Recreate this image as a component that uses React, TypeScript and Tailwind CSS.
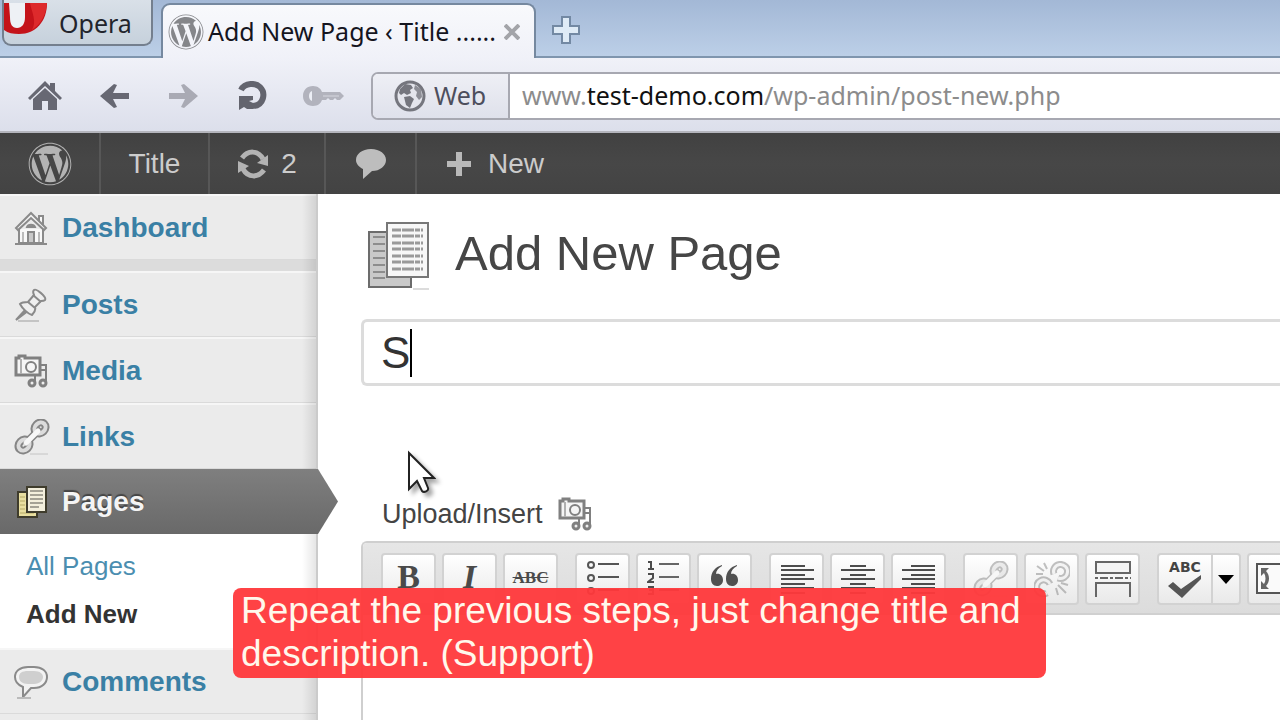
import { useState, type ReactNode } from "react";
import { FaWordpress } from "react-icons/fa";
import clsx from "clsx";

// --- browser chrome icons

const OperaLogo = () => (
  <svg width="46" height="36" viewBox="0 0 46 36" aria-hidden="true">
    <path d="M0 3H43C43 21 32 34 15 34C9 34 4 33 0 30Z" fill="#c4131a" />
    <path d="M26 3H43C42 15 37 24 28 30C33 21 28 13 26 3Z" fill="#dd2a2c" />
    <path d="M5 3H21V17C21 24 18 28 13 28C8 28 6 24 6 17Z" fill="#eef1f5" />
  </svg>
);

const HomeIcon = () => (
  <svg width="34" height="30" viewBox="0 0 34 30" fill="#676873" aria-hidden="true">
    <path d="M17 0L22 5V2H27V10L34 17L32 19L17 5L2 19L0 17Z" />
    <path d="M17 7L29 18V29H20V20H14V29H5V18Z" />
  </svg>
);

const ArrowIcon = ({ flip, color }: { flip?: boolean; color: string }) => (
  <svg
    className={clsx(flip && "rotate-180")}
    width="30"
    height="26"
    viewBox="0 0 30 26"
    fill={color}
    aria-hidden="true"
  >
    <path d="M0 13L14 1L17 2L13 10H29V16H13L17 24L14 25Z" />
  </svg>
);

const ReloadIcon = () => (
  <svg width="30" height="30" viewBox="0 0 30 30" aria-hidden="true">
    <path
      d="M3 9C7 1 18 2 22 6C28 12 26 25 14 25"
      fill="none"
      stroke="#63646e"
      strokeWidth="6"
    />
    <path d="M1 15H15V19L11 20L15 22V28H9L6 26L1 29Z" fill="#63646e" />
  </svg>
);

const KeyIcon = () => (
  <svg width="41" height="20" viewBox="0 0 41 20" aria-hidden="true">
    <path
      d="M10 0C15 0 18 3 19 6H37L41 10L37 14H34L32 12L30 14H27L25 12L23 14H19C18 17 15 20 10 20C4 20 0 16 0 10S4 0 10 0Z"
      fill="#b2b3bd"
    />
    <path d="M9 5C5 6 5 14 9 15Z" fill="#eceef5" />
    <path d="M20 10H36" stroke="#c4c5ce" strokeWidth="2" />
  </svg>
);

const GlobeIcon = () => (
  <svg width="32" height="32" viewBox="0 0 32 32" aria-hidden="true">
    <circle cx="16" cy="16" r="14" fill="#e4e5ec" stroke="#75767e" strokeWidth="3" />
    <path d="M6 9L11 4L17 5L19 8L16 10L17 13L13 15L10 13L7 15L5 13Z" fill="#75767e" />
    <path d="M10 17L16 16L20 19L18 23L16 28L12 25Z" fill="#75767e" />
    <path d="M21 5L27 9L28 17L25 20L22 16L23 12L20 9Z" fill="#8d8e96" />
  </svg>
);

const NewTabIcon = () => (
  <svg width="28" height="28" viewBox="0 0 28 28" aria-hidden="true">
    <path
      d="M10 1H18V10H27V18H18V27H10V18H1V10H10Z"
      fill="#dfebf6"
      stroke="#7389a3"
      strokeWidth="2"
    />
  </svg>
);

const CloseIcon = () => (
  <svg width="16" height="16" viewBox="0 0 16 16" aria-hidden="true">
    <path d="M1 1L15 15M15 1L1 15" stroke="#a3a4a9" strokeWidth="4" />
  </svg>
);

// --- admin bar icons

const UpdatesIcon = () => (
  <svg width="32" height="30" viewBox="0 0 32 30" aria-hidden="true">
    <g fill="none" stroke="#b3b3b3" strokeWidth="5">
      <path d="M5 9C11 1 21 1 26 10" />
      <path d="M27 21C21 29 11 29 6 20" />
    </g>
    <path d="M31 6V17L20 14Z" fill="#b3b3b3" />
    <path d="M1 24V12L12 17Z" fill="#b3b3b3" />
  </svg>
);

const BubbleIcon = () => (
  <svg width="32" height="32" viewBox="0 0 32 32" aria-hidden="true">
    <path
      d="M16 1C25 1 31 6 31 12S25 23 17 23L8 31V21C4 19 1 16 1 12C1 6 7 1 16 1Z"
      fill="#bdbdbd"
    />
  </svg>
);

const PlusIcon = () => (
  <svg width="26" height="26" viewBox="0 0 26 26" aria-hidden="true">
    <path d="M10 1H16V10H25V16H16V25H10V16H1V10H10Z" fill="#b9b9b9" />
  </svg>
);

// --- sidebar icons

const DashboardIcon = () => (
  <svg width="34" height="34" viewBox="0 0 34 34" fill="none" stroke="#8a8a8a" strokeWidth="2" aria-hidden="true">
    <path d="M5 18V32H29V18" fill="#f8f8f8" />
    <path d="M25 10V5H29V14" fill="#f8f8f8" />
    <path d="M17 2L32 17L30 19L17 7L4 19L2 17Z" fill="#f2f2f2" />
    <path d="M14 31V21H20V31" fill="#c9c9c9" />
    <path d="M13 16C14 13 20 13 21 16Z" fill="#aaa" />
    <path d="M9 21V31M25 21V31" stroke="#bbb" />
    <path d="M1 33H33" />
  </svg>
);

const PinIcon = () => (
  <svg width="34" height="34" viewBox="0 0 34 34" fill="none" stroke="#8a8a8a" strokeWidth="2" aria-hidden="true">
    <path d="M2 32L12 21L14 23Z" fill="#999" />
    <path
      d="M20 2C22 0 33 9 31 12C30 13 28 13 27 13L21 19C22 22 20 25 18 27C14 26 8 20 6 16C8 14 12 14 14 14L20 7C19 5 19 3 20 2Z"
      fill="#efefef"
    />
    <path d="M19 7L27 14M14 14L21 20" />
    <path d="M4 33H25" stroke="#c4c4c4" />
  </svg>
);

const MediaIcon = () => (
  <svg width="34" height="34" viewBox="0 0 34 34" fill="none" stroke="#808080" strokeWidth="2" aria-hidden="true">
    <path d="M21 28V11H32V29" />
    <path d="M21 16H32" />
    <circle cx="18" cy="29" r="3" fill="#eee" strokeWidth="3" />
    <circle cx="29" cy="29" r="3" fill="#eee" strokeWidth="3" />
    <path d="M2 4H5V2H11V4H26V21H2Z" fill="#f5f5f5" strokeWidth="3" />
    <path d="M7 5V20" stroke="#b0b0b0" />
    <circle cx="17" cy="13" r="5" />
  </svg>
);

const LinkIcon = () => (
  <svg width="36" height="36" viewBox="0 0 36 36" fill="none" aria-hidden="true">
    <g stroke="#858585" strokeWidth="8" strokeLinecap="round">
      <ellipse cx="26" cy="9" rx="6" ry="5" transform="rotate(-45 26 9)" />
      <ellipse cx="10" cy="26" rx="6" ry="5" transform="rotate(-45 10 26)" />
      <path d="M13 23L24 12" />
    </g>
    <g stroke="#dcdcdc" strokeWidth="4" strokeLinecap="round">
      <ellipse cx="26" cy="9" rx="6" ry="5" transform="rotate(-45 26 9)" />
      <ellipse cx="10" cy="26" rx="6" ry="5" transform="rotate(-45 10 26)" />
    </g>
    <path d="M12 24L24 12" stroke="#f8f8f8" strokeWidth="5" strokeLinecap="round" />
    <path d="M16 35H34" stroke="#c4c4c4" />
  </svg>
);

const UnlinkIcon = () => (
  <svg width="36" height="36" viewBox="0 0 36 36" fill="none" aria-hidden="true">
    <g stroke="#858585" strokeWidth="7">
      <path d="M20 13A7 7 0 1 1 24 17" />
      <path d="M16 23A7 7 0 1 0 13 32" />
    </g>
    <g stroke="#eee" strokeWidth="3">
      <path d="M20 13A7 7 0 1 1 24 17" />
      <path d="M16 23A7 7 0 1 0 13 32" />
    </g>
    <path
      d="M3 5L10 10M10 2L13 8M2 13L9 13M24 24L32 32M22 27L24 34M27 22L34 24"
      stroke="#858585"
      strokeWidth="2"
    />
  </svg>
);

const PagesIcon = () => (
  <svg width="32" height="34" viewBox="0 0 32 34" aria-hidden="true">
    <path d="M2 7H21V32H2Z" fill="#e9dfa0" stroke="#3f3c2c" strokeWidth="2" />
    <path d="M4 12H9M4 16H9M4 20H9M4 24H9M4 28H18" stroke="#b5a967" strokeWidth="1" />
    <path d="M11 2H30V27H11Z" fill="#f3efdc" stroke="#3f3c2c" strokeWidth="2" />
    <path d="M14 6H27M14 10H27M14 14H27M14 18H27M14 22H23" stroke="#a5a295" strokeWidth="2" />
  </svg>
);

const CommentsIcon = () => (
  <svg width="34" height="34" viewBox="0 0 34 34" aria-hidden="true">
    <path
      d="M14 2H20C28 2 33 6 33 12S28 23 20 23H17L9 32V22C4 20 1 17 1 12C1 6 6 2 14 2Z"
      fill="#f3f3f3"
      stroke="#8a8a8a"
      strokeWidth="2"
    />
    <path d="M14 6H20C26 6 29 9 29 12S26 19 20 19H14C8 19 5 16 5 12S8 6 14 6Z" fill="#cfcfcf" />
    <path d="M3 33H17" stroke="#bbb" strokeWidth="2" />
  </svg>
);

const BigPagesIcon = () => (
  <svg width="64" height="70" viewBox="0 0 64 70" aria-hidden="true">
    <path d="M2 11H44V66H2Z" fill="#c9c9c9" stroke="#6c6c6c" strokeWidth="2" />
    <path d="M6 16H18M6 23H18M6 30H18M6 37H18M6 44H18M6 51H18M6 57H18" stroke="#8d8d8d" strokeWidth="2" />
    <path d="M46 68H62" stroke="#dcdcdc" strokeWidth="2" />
    <path d="M20 2H61V56H20Z" fill="#f7f7f7" stroke="#777" strokeWidth="2" />
    <path
      d="M25 9H56M25 15H56M25 22H56M25 28H56M25 35H56M25 41H56M25 48H56"
      stroke="#9a9a9a"
      strokeWidth="3"
      strokeDasharray="9 1 12 1 5 1"
    />
  </svg>
);

// --- editor icons

const AlignIcon = ({ lines }: { lines: string }) => (
  <svg width="34" height="32" viewBox="0 0 34 32" stroke="#4c4c4c" strokeWidth="2" aria-hidden="true">
    <path d={lines} />
  </svg>
);

const BulletsIcon = () => (
  <svg width="34" height="38" viewBox="0 0 34 38" fill="none" stroke="#555" strokeWidth="2" aria-hidden="true">
    <circle cx="5" cy="5" r="3" />
    <circle cx="5" cy="18" r="3" />
    <circle cx="5" cy="31" r="3" />
    <path d="M12 4H33M12 17H33M12 30H33" />
  </svg>
);

const NumbersIcon = () => (
  <svg width="34" height="38" viewBox="0 0 34 38" fill="none" stroke="#4c4c4c" strokeWidth="2" aria-hidden="true">
    <path d="M1 2H4V9M1 9H7" />
    <path d="M1 14H6V18L1 22H7" />
    <path d="M1 27H6V34H1M2 30H6" />
    <path d="M12 4H32M12 17H32M12 30H32" stroke="#666" />
  </svg>
);

const QuoteIcon = () => (
  <svg width="28" height="28" viewBox="0 0 28 28" fill="#505050" aria-hidden="true">
    <path d="M11 1C7 3 5 6 5 9C9 8 12 11 12 15C12 19 9 21 6 21C2 21 0 18 0 14C0 7 4 2 11 0Z" />
    <path d="M26 1C22 3 20 6 20 9C24 8 27 11 27 15C27 19 24 21 21 21C17 21 15 18 15 14C15 7 19 2 26 0Z" />
  </svg>
);

const MoreIcon = () => (
  <svg width="36" height="36" viewBox="0 0 36 36" fill="none" stroke="#666" strokeWidth="2" aria-hidden="true">
    <path d="M1 1H35V12H1Z" fill="#f4f4f4" />
    <path d="M0 17H36" strokeDasharray="3 2 8 2" />
    <path d="M1 36V22H35V36" />
  </svg>
);

const SpellcheckIcon = () => (
  <span className="flex flex-col items-center font-['DejaVu_Sans',sans-serif] text-[14px] leading-[14px] font-bold text-[#444]">
    ABC
    <svg width="36" height="24" viewBox="0 0 36 24" aria-hidden="true">
      <path d="M1 12L6 8L14 15L34 1V5L15 24Z" fill="#555" />
    </svg>
  </span>
);

const FullscreenIcon = () => (
  <svg width="44" height="32" viewBox="0 0 44 32" aria-hidden="true">
    <path d="M1 1H43V30H1Z" fill="#fafafa" stroke="#555" strokeWidth="2" />
    <path d="M5 5H13L10 8C14 12 14 19 10 23L13 26H5V18L8 21C10 18 10 13 8 10L5 13Z" fill="#666" />
    <path d="M39 5H31L34 8C30 12 30 19 34 23L31 26H39V18L36 21C34 18 34 13 36 10L39 13Z" fill="#666" />
  </svg>
);

type Tool = { label: string; icon: ReactNode; disabled?: boolean };

const toolGroups: Tool[][] = [
  [
    { label: "Bold", icon: <span className="pb-1 font-['Liberation_Serif',serif] text-[34px] font-bold">B</span> },
    { label: "Italic", icon: <span className="pb-1 font-['Liberation_Serif',serif] text-[34px] font-bold italic">I</span> },
    {
      label: "Strikethrough",
      icon: <span className="pb-1 font-['Liberation_Serif',serif] text-[17px] font-bold line-through">ABC</span>,
    },
  ],
  [
    { label: "Unordered list", icon: <BulletsIcon /> },
    { label: "Ordered list", icon: <NumbersIcon /> },
    { label: "Blockquote", icon: <QuoteIcon /> },
  ],
  [
    {
      label: "Align left",
      icon: <AlignIcon lines="M1 3H25M1 7H34M1 12H25M1 16H34M1 21H25M1 25H34M1 30H25" />,
    },
    {
      label: "Align center",
      icon: <AlignIcon lines="M9 3H25M0 7H34M9 12H25M0 16H34M9 21H25M0 25H34M9 30H25" />,
    },
    {
      label: "Align right",
      icon: <AlignIcon lines="M9 3H33M0 7H33M9 12H33M0 16H33M9 21H33M0 25H33M9 30H33" />,
    },
  ],
  [
    { label: "Insert link", icon: <LinkIcon />, disabled: true },
    { label: "Unlink", icon: <UnlinkIcon />, disabled: true },
    { label: "Insert More tag", icon: <MoreIcon /> },
  ],
];

const ToolButton = ({ tool }: { tool: Tool }) => (
  <button
    type="button"
    aria-label={tool.label}
    disabled={tool.disabled}
    className="flex h-[52px] w-[55px] shrink-0 items-center justify-center rounded-[4px] border-2 border-[#d2d2d2] bg-linear-to-b from-white to-[#e9e9e9] leading-none text-[#4a4a4a]"
  >
    <span className={clsx("flex", tool.disabled && "opacity-50")}>{tool.icon}</span>
  </button>
);

const MenuItem = ({ label, icon, className }: { label: string; icon: ReactNode; className?: string }) => (
  <a
    href="#"
    className={clsx(
      "flex h-[66px] items-center border-t-2 border-t-[#f6f6f6] border-b border-b-[#dadada] pl-[14px] text-[28px] font-bold text-[#3a80a5]",
      className
    )}
  >
    <span className="flex w-12 shrink-0">{icon}</span>
    {label}
  </a>
);

const BrowserChrome = () => (
  <header className="shrink-0 font-['Noto_Sans','Open_Sans',sans-serif]">
    <div className="flex h-[58px] items-end bg-linear-to-b from-[#a3b8d6] to-[#bdd0e8] shadow-[inset_0_-2px_0_#7f95ae]">
      <button
        type="button"
        className="ml-[2px] flex h-[46px] w-[151px] shrink-0 items-start self-start overflow-hidden rounded-b-[9px] border-2 border-t-0 border-[#747f8e] bg-linear-to-b from-[#d9e0e8] to-[#c6d1dc] text-[25px] text-[#22242c]"
      >
        <OperaLogo />
        <span className="ml-[9px] leading-[46px]">Opera</span>
      </button>
      <div className="ml-2 flex h-[55px] w-[375px] shrink-0 items-center rounded-t-[9px] border-2 border-b-0 border-[#75889f] bg-linear-to-b from-[#f8f9fc] to-[#f0f1f8] pl-[5px]">
        <FaWordpress className="size-9 shrink-0 text-[#85868a]" aria-hidden="true" />
        <span className="ml-1 text-[25px] whitespace-nowrap text-[#15151f]">
          Add New Page ‹ Title ......
        </span>
        <button type="button" aria-label="Close tab" className="ml-2">
          <CloseIcon />
        </button>
      </div>
      <button type="button" aria-label="New tab" className="mb-[14px] ml-4">
        <NewTabIcon />
      </button>
    </div>

    <div className="flex h-[75px] items-center border-b-2 border-[#b4b5bc] bg-linear-to-b from-[#f0f1f8] to-[#dcdfeb] pt-[2px] pl-[10px]">
      <button type="button" aria-label="Home" className="flex w-[70px] justify-center">
        <HomeIcon />
      </button>
      <button type="button" aria-label="Back" className="flex w-[70px] justify-center">
        <ArrowIcon color="#676873" />
      </button>
      <button type="button" aria-label="Forward" className="flex w-[66px] justify-center">
        <ArrowIcon flip color="#a9aab4" />
      </button>
      <button type="button" aria-label="Reload" className="flex w-[74px] justify-center">
        <ReloadIcon />
      </button>
      <button type="button" aria-label="Log in with wand" className="flex w-[66px] justify-center">
        <KeyIcon />
      </button>
      <div className="ml-[15px] flex h-12 grow items-stretch overflow-hidden rounded-l-[7px] border-2 border-r-0 border-[#a7a8b1] bg-white text-[25px]">
        <button
          type="button"
          className="flex w-[137px] shrink-0 items-center border-r-2 border-[#a7a8b1] bg-linear-to-b from-[#eeeff5] to-[#dfe1eb] pl-[21px] text-[#4d4e5c]"
        >
          <GlobeIcon />
          <span className="ml-2">Web</span>
        </button>
        <p className="flex items-center pl-3 whitespace-nowrap text-[#8c8c8c]">
          www.<span className="text-[#111]">test-demo.com</span>/wp-admin/post-new.php
        </p>
      </div>
    </div>
  </header>
);

const AdminBar = () => (
  <nav className="flex h-[61px] shrink-0 items-stretch bg-linear-to-b from-[#414141] via-[#474747] to-[#434343] text-[28px] text-[#cccccc] *:flex *:items-center *:justify-center">
    <a href="#" aria-label="About WordPress" className="w-[101px] border-r-2 border-[#575757]">
      <FaWordpress className="size-11 text-[#b3b3b3]" />
    </a>
    <a href="#" className="w-[109px] border-r-2 border-[#575757]">
      Title
    </a>
    <a href="#" className="w-[116px] gap-3 border-r-2 border-[#575757]">
      <UpdatesIcon />2
    </a>
    <a href="#" aria-label="Comments" className="w-[91px] border-r-2 border-[#575757]">
      <BubbleIcon />
    </a>
    <a href="#" className="gap-4 pl-[29px]">
      <PlusIcon />
      New
    </a>
  </nav>
);

const Sidebar = () => (
  <aside className="relative w-[318px] shrink-0 bg-[#ebebeb]">
    <div className="border-b-[11px] border-[#dcdcdc]">
      <MenuItem
        label="Dashboard"
        icon={<DashboardIcon />}
        className="h-[65px] border-t-0 border-b-[#c9c9c9]"
      />
    </div>
    <MenuItem label="Posts" icon={<PinIcon />} />
    <MenuItem label="Media" icon={<MediaIcon />} />
    <MenuItem label="Links" icon={<LinkIcon />} />

    {/* current item with its pointer sticking out over the content */}
    <div className="relative z-10 mr-[-20px]">
      <a
        href="#"
        aria-current="page"
        className="flex h-[65px] items-center bg-linear-to-b from-[#7f7f7f] to-[#696969] pl-[16px] text-[28px] font-bold text-[#f4f4f4] [clip-path:polygon(0_0,318px_0,100%_50%,318px_100%,0_100%)] [text-shadow:0_-2px_1px_#444]"
      >
        <span className="flex w-[46px] shrink-0">
          <PagesIcon />
        </span>
        Pages
      </a>
    </div>
    <div className="flex h-[114px] flex-col bg-white pt-2 pl-[26px] text-[26px] leading-[48px]">
      <a href="#" className="text-[#4b8eb0]">
        All Pages
      </a>
      <a href="#" className="font-bold text-[#333]">
        Add New
      </a>
    </div>
    <MenuItem label="Comments" icon={<CommentsIcon />} className="border-t-[#dadada]" />
    <div className="pointer-events-none absolute inset-y-0 right-0 w-4 border-r-2 border-[#cbcbcb] bg-linear-to-r from-transparent to-black/10" />
  </aside>
);

const Editor = () => {
  const [title, setTitle] = useState("S");

  return (
    <main className="flex min-w-0 grow flex-col bg-white pl-[43px]">
      <div className="mt-[27px] flex h-[70px] items-center pl-[6px]">
        <BigPagesIcon />
        <h1 className="ml-6 pb-[6px] text-[49px] leading-none whitespace-nowrap text-[#464646]">
          Add New Page
        </h1>
      </div>

      <div className="relative mt-7 flex h-[67px] shrink-0">
        <input
          type="text"
          aria-label="Page title"
          value={title}
          onChange={(e) => setTitle(e.target.value)}
          className="w-full rounded-l-[6px] border-[3px] border-r-0 border-[#dcdcdc] px-[17px] text-[44px] text-[#333] outline-none"
        />
        {title === "S" && <span className="absolute top-[10px] left-[49px] h-12 w-[2px] bg-black" />}
      </div>

      <div className="mt-[108px] flex h-10 shrink-0 items-center pl-[21px] text-[27px] text-[#444]">
        Upload/Insert
        <button type="button" aria-label="Add media" className="ml-[15px]">
          <MediaIcon />
        </button>
      </div>

      <div className="mt-[7px] flex grow flex-col rounded-tl-[6px] border-t-2 border-l-2 border-[#cfcfcf]">
        <div className="flex h-[72px] shrink-0 items-start gap-[17px] overflow-hidden rounded-tl-[4px] border-b-2 border-[#d0d0d0] bg-linear-to-b from-[#e6e6e6] to-[#dcdcdc] pt-[10px] pl-[18px]">
          {toolGroups.map((group, i) => (
            <div key={i} className="flex shrink-0 gap-[6px]">
              {group.map((tool) => (
                <ToolButton key={tool.label} tool={tool} />
              ))}
            </div>
          ))}
          <div className="flex shrink-0 gap-[6px]">
            <div className="flex h-[52px] w-[84px] shrink-0 rounded-[4px] border-2 border-[#d2d2d2] bg-linear-to-b from-white to-[#e9e9e9]">
              <button
                type="button"
                aria-label="Toggle spellchecker"
                className="flex w-[54px] items-center justify-center border-r-2 border-[#d2d2d2]"
              >
                <SpellcheckIcon />
              </button>
              <button
                type="button"
                aria-label="Spellchecker languages"
                className="flex grow items-center justify-center"
              >
                <svg width="16" height="9" viewBox="0 0 16 9" aria-hidden="true">
                  <path d="M0 0H16L8 9Z" />
                </svg>
              </button>
            </div>
            <button
              type="button"
              aria-label="Full screen"
              className="flex h-[52px] w-[60px] shrink-0 items-center rounded-[4px] border-2 border-[#d2d2d2] bg-linear-to-b from-white to-[#e9e9e9] pl-[7px]"
            >
              <span className="flex shrink-0">
                <FullscreenIcon />
              </span>
            </button>
          </div>
        </div>
        <textarea aria-label="Page content" className="w-full grow resize-none outline-none" />
      </div>
    </main>
  );
};

const Pointer = () => (
  <svg
    className="pointer-events-none absolute top-[450px] left-[406px] z-20 drop-shadow-[4px_4px_2px_rgba(0,0,0,0.35)]"
    width="30"
    height="46"
    viewBox="0 0 30 46"
    aria-hidden="true"
  >
    <path
      d="M3 3V39L11 31L16 41C18 43 23 41 22 38L18 28H28Z"
      fill="#fff"
      stroke="#222"
      strokeWidth="2"
    />
  </svg>
);

export default function App() {
  return (
    <div className="relative flex h-screen flex-col overflow-hidden bg-white font-['Liberation_Sans',Arial,sans-serif]">
      <BrowserChrome />
      <AdminBar />
      <div className="flex min-h-0 grow">
        <Sidebar />
        <Editor />
      </div>
      <Pointer />
      <p className="absolute top-[588px] left-[233px] z-30 w-[813px] rounded-[8px] bg-[#ff383b]/95 px-2 pt-[1px] pb-[3px] text-[37px] leading-[43px] text-[#fff8ec]">
        Repeat the previous steps, just change title and description. (Support)
      </p>
    </div>
  );
}
